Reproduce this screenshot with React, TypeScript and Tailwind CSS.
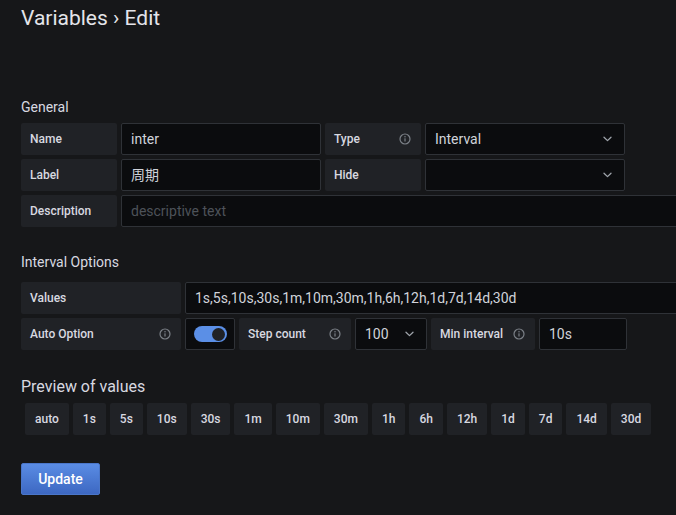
import React from "react";

// Variables › Edit — interval variable form, dark theme.

const PREVIEW = ["auto", "1s", "5s", "10s", "30s", "1m", "10m", "30m", "1h", "6h", "12h", "1d", "7d", "14d", "30d"];

function Info() {
  return (
    <svg width="12" height="12" viewBox="0 0 12 12" fill="none" className="shrink-0">
      <circle cx="6" cy="6" r="5" stroke="#7b8087" strokeWidth="1.2" />
      <rect x="5.4" y="5.2" width="1.2" height="3.4" rx="0.4" fill="#7b8087" />
      <circle cx="6" cy="3.7" r="0.75" fill="#7b8087" />
    </svg>
  );
}

function Chevron() {
  return (
    <svg width="9" height="6" viewBox="0 0 9 6" fill="none" className="shrink-0">
      <path d="M1 1.2 L4.5 4.6 L8 1.2" stroke="#9fa4ab" strokeWidth="1.3" strokeLinecap="round" strokeLinejoin="round" />
    </svg>
  );
}

function Label({ w, children, info }: { w: string; children: React.ReactNode; info?: boolean }) {
  return (
    <div className={`${w} flex h-8 shrink-0 items-center justify-between rounded-[2px] bg-[#202226] pl-[9px] pr-[10px] text-[12px] font-medium text-[#d8d9e0]`}>
      <span>{children}</span>
      {info && <Info />}
    </div>
  );
}

function Input({ w, children, placeholder }: { w: string; children?: React.ReactNode; placeholder?: string }) {
  return (
    <div className={`${w} flex h-8 shrink-0 items-center rounded-[2px] border border-[#2f3237] bg-[#0b0c0e] px-[9px] text-[14px] text-[#d0d3da]`}>
      {children ?? <span className="text-[#4d5259]">{placeholder}</span>}
    </div>
  );
}

function Select({ w, children }: { w: string; children?: React.ReactNode }) {
  return (
    <div className={`${w} flex h-8 shrink-0 items-center justify-between rounded-[2px] border border-[#2f3237] bg-[#0b0c0e] pl-[9px] pr-[12px] text-[14px] text-[#d0d3da]`}>
      <span>{children}</span>
      <Chevron />
    </div>
  );
}

export default function App() {
  return (
    <div className="h-[515px] w-full overflow-hidden bg-[#161719] pl-[21px] text-[#d8d9e0]" style={{ fontFamily: "Roboto, 'Noto Sans CJK SC', sans-serif" }}>
      <h1 className="pt-[5px] text-[21px] leading-[26px] text-[#e4e5ea]">Variables › Edit</h1>

      <h3 className="mt-[66px] text-[14px] leading-[20px]">General</h3>
      <div className="mt-[6px] flex flex-col gap-1">
        <div className="flex gap-1">
          <Label w="w-[96px]">Name</Label>
          <Input w="w-[200px]">inter</Input>
          <Label w="w-[96px]" info>Type</Label>
          <Select w="w-[200px]">Interval</Select>
        </div>
        <div className="flex gap-1">
          <Label w="w-[96px]">Label</Label>
          <Input w="w-[200px]">周期</Input>
          <Label w="w-[96px]">Hide</Label>
          <Select w="w-[200px]" />
        </div>
        <div className="flex gap-1">
          <Label w="w-[96px]">Description</Label>
          <Input w="w-[600px]" placeholder="descriptive text" />
        </div>
      </div>

      <h3 className="mt-[25px] text-[14px] leading-[20px]">Interval Options</h3>
      <div className="mt-[10px] flex flex-col gap-1">
        <div className="flex gap-1">
          <Label w="w-[160px]">Values</Label>
          <Input w="w-[600px]">1s,5s,10s,30s,1m,10m,30m,1h,6h,12h,1d,7d,14d,30d</Input>
        </div>
        <div className="flex gap-1">
          <Label w="w-[160px]" info>Auto Option</Label>
          <div className="flex h-8 w-[50px] shrink-0 items-center justify-center rounded-[2px] border border-[#2f3237] bg-[#0b0c0e]">
            <div className="flex h-4 w-[33px] items-center justify-end rounded-full bg-[#5b8fe6] pr-[2px]">
              <div className="h-[13px] w-[13px] rounded-full bg-[#202226]" />
            </div>
          </div>
          <Label w="w-[112px]" info>Step count</Label>
          <Select w="w-[72px]">100</Select>
          <Label w="w-[104px]" info>Min interval</Label>
          <Input w="w-[88px]">10s</Input>
        </div>
      </div>

      <h3 className="mt-[25px] text-[16px] leading-[24px]">Preview of values</h3>
      <div className="mt-[4px] flex gap-1 pl-1">
        {PREVIEW.map((p) => (
          <div key={p} className="flex h-8 items-center rounded-[2px] bg-[#202226] px-[10px] text-[12px] font-medium text-[#d8d9e0]">
            {p}
          </div>
        ))}
      </div>

      <button className="mt-[28px] flex h-8 w-[79px] items-center justify-center rounded-[2px] border border-[#4a76c9] bg-gradient-to-b from-[#5a8ce4] to-[#3d68c2] text-[14px] font-medium text-white">
        Update
      </button>
    </div>
  );
}
